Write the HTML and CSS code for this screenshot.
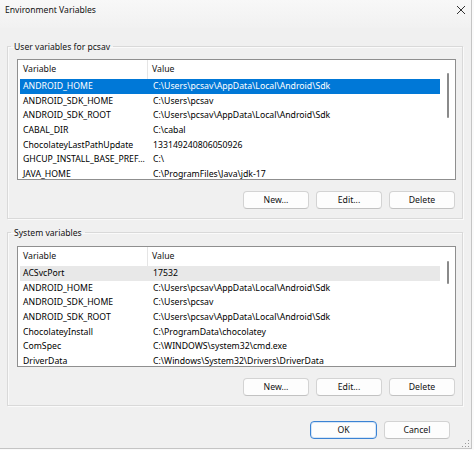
FILE: index.html
```html
<!DOCTYPE html>
<html>
<head>
<meta charset="utf-8">
<link rel="stylesheet" href="styles.css">
</head>
<body>
<div class="window">
  <div class="titlebar">
    <span class="title">Environment Variables</span>
    <svg class="close" width="10" height="10" viewBox="0 0 10 10"><path d="M1 1L9 9M9 1L1 9" stroke="#333" stroke-width="1" fill="none"/></svg>
  </div>

  <fieldset class="group">
    <legend>User variables for pcsav</legend>
    <div class="list">
      <div class="rows">
        <div class="row head"><span class="c1">Variable</span><span class="c2">Value</span></div>
        <div class="row sel"><span class="c1">ANDROID_HOME</span><span class="c2">C:\Users\pcsav\AppData\Local\Android\Sdk</span></div>
        <div class="row"><span class="c1">ANDROID_SDK_HOME</span><span class="c2">C:\Users\pcsav</span></div>
        <div class="row"><span class="c1">ANDROID_SDK_ROOT</span><span class="c2">C:\Users\pcsav\AppData\Local\Android\Sdk</span></div>
        <div class="row"><span class="c1">CABAL_DIR</span><span class="c2">C:\cabal</span></div>
        <div class="row"><span class="c1">ChocolateyLastPathUpdate</span><span class="c2">133149240806050926</span></div>
        <div class="row"><span class="c1">GHCUP_INSTALL_BASE_PREF...</span><span class="c2">C:\</span></div>
        <div class="row"><span class="c1">JAVA_HOME</span><span class="c2">C:\ProgramFiles\Java\jdk-17</span></div>
      </div>
      <div class="scroll"><div class="thumb t1"></div></div>
    </div>
    <div class="buttons">
      <button class="btn">New...</button>
      <button class="btn">Edit...</button>
      <button class="btn">Delete</button>
    </div>
  </fieldset>

  <fieldset class="group second">
    <legend>System variables</legend>
    <div class="list">
      <div class="rows">
        <div class="row head"><span class="c1">Variable</span><span class="c2">Value</span></div>
        <div class="row hov"><span class="c1">ACSvcPort</span><span class="c2">17532</span></div>
        <div class="row"><span class="c1">ANDROID_HOME</span><span class="c2">C:\Users\pcsav\AppData\Local\Android\Sdk</span></div>
        <div class="row"><span class="c1">ANDROID_SDK_HOME</span><span class="c2">C:\Users\pcsav</span></div>
        <div class="row"><span class="c1">ANDROID_SDK_ROOT</span><span class="c2">C:\Users\pcsav\AppData\Local\Android\Sdk</span></div>
        <div class="row"><span class="c1">ChocolateyInstall</span><span class="c2">C:\ProgramData\chocolatey</span></div>
        <div class="row"><span class="c1">ComSpec</span><span class="c2">C:\WINDOWS\system32\cmd.exe</span></div>
        <div class="row"><span class="c1">DriverData</span><span class="c2">C:\Windows\System32\Drivers\DriverData</span></div>
      </div>
      <div class="scroll"><div class="thumb t2"></div></div>
    </div>
    <div class="buttons">
      <button class="btn">New...</button>
      <button class="btn">Edit...</button>
      <button class="btn">Delete</button>
    </div>
  </fieldset>

  <div class="footer">
    <button class="btn ok">OK</button>
    <button class="btn">Cancel</button>
  </div>

  <svg class="grip" width="10" height="10" viewBox="0 0 10 10">
    <rect x="8" y="2" width="1" height="1" fill="#999"/>
    <rect x="5" y="5" width="1" height="1" fill="#999"/>
    <rect x="8" y="5" width="1" height="1" fill="#999"/>
    <rect x="2" y="8" width="1" height="1" fill="#999"/>
    <rect x="5" y="8" width="1" height="1" fill="#999"/>
    <rect x="8" y="8" width="1" height="1" fill="#999"/>
  </svg>
</div>
</body>
</html>
```

FILE: styles.css
```css
html, body {
  margin: 0;
  padding: 0;
  background: #fafafa;
}
body {
  width: 474px;
  height: 450px;
  overflow: hidden;
  font-family: "Noto Sans", "Open Sans", sans-serif;
  font-size: 8.7px;
  color: #000;
}
.window {
  position: relative;
  width: 472px;
  height: 449px;
  box-sizing: border-box;
  background: #f0f0f0;
  border-right: 1px solid #c4c4c4;
  border-bottom: 1px solid #c4c4c4;
  display: flex;
  flex-direction: column;
}
.titlebar {
  height: 28px;
  flex: none;
  display: flex;
  align-items: flex-start;
  justify-content: space-between;
  padding: 3px 5px 0 5px;
  box-sizing: border-box;
  background: linear-gradient(#f8f8f8, #f1f1f1);
}
.title {
  font-size: 8.6px;
  line-height: 14px;
  color: #111;
}
.close {
  margin-top: 2px;
}
.group {
  margin: 10px 0 0 7px;
  width: 456px;
  box-sizing: border-box;
  border: 1px solid #d9d9d9;
  box-shadow: 1px 1px 0 #fafafa, inset 1px 1px 0 #fafafa;
  padding: 5px 6px 9px 9px;
  min-width: 0;
}
.group.second {
  margin-top: 5px;
  padding-top: 6px;
}
.group legend {
  padding: 2px 3px 0 3px;
  margin-left: -6px;
  line-height: 14px;
  font-size: 8.6px;
  color: #111;
}
.list {
  height: 121px;
  box-sizing: border-box;
  border: 1px solid #8f8f8f;
  background: #fff;
  display: flex;
  overflow: hidden;
}
.rows {
  flex: 1;
  padding: 0 1px 0 2px;
  overflow: hidden;
  min-width: 0;
}
.row {
  display: flex;
  height: 14.67px;
  line-height: 14.67px;
  white-space: nowrap;
}
.row .c1 {
  width: 130px;
  flex: none;
  padding-left: 3px;
  box-sizing: border-box;
  overflow: hidden;
}
.row .c2 {
  padding-left: 3px;
}
.row.head {
  height: 19px;
  line-height: 19px;
  color: #111;
}
.row.head .c1 {
  width: 128px;
  border-right: 1px solid #e5e5e5;
  margin-right: 1px;
}
.row.sel {
  background: #0078d7;
  color: #fff;
}
.row.hov {
  background: #e8e8e8;
}
.scroll {
  width: 14px;
  flex: none;
  background: #fff;
}
.thumb {
  width: 2px;
  margin-left: 6px;
  background: #8a8a8a;
  border-radius: 1px;
}
.thumb.t1 {
  margin-top: 13px;
  height: 45px;
}
.thumb.t2 {
  margin-top: 14px;
  height: 23px;
}
.buttons {
  display: flex;
  justify-content: flex-end;
  gap: 7px;
  margin-top: 11px;
  padding-right: 1px;
}
.btn {
  width: 66px;
  height: 18px;
  box-sizing: border-box;
  padding: 0;
  font-family: "Noto Sans", "Open Sans", sans-serif;
  font-size: 8.7px;
  color: #111;
  background: #fdfdfd;
  border: 1px solid #d3d3d3;
  border-bottom-color: #c2c2c2;
  border-radius: 4px;
  line-height: 15px;
}
.footer {
  display: flex;
  justify-content: flex-end;
  gap: 7px;
  margin-top: 15px;
  padding-right: 21px;
}
.btn.ok {
  width: 67px;
  border: 1px solid #3b83d4;
  box-shadow: inset 0 0 0 1px #d6e6f7;
}
.grip {
  position: absolute;
  right: 1px;
  bottom: 0;
}
```
